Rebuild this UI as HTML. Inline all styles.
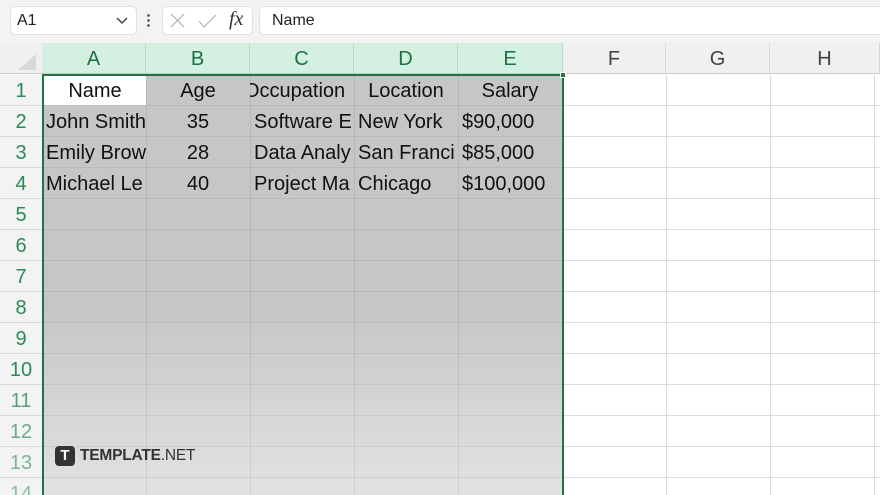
<!DOCTYPE html>
<html><head><meta charset="utf-8"><style>
*{margin:0;padding:0;box-sizing:border-box}
html,body{width:880px;height:495px;overflow:hidden}
body{background:#fff;font-family:"Liberation Sans",sans-serif;position:relative}
.a{position:absolute}
.top{left:0;top:0;width:880px;height:43px;background:#f3f3f3}
.box{background:#fff;border:1px solid #e1e1e1;border-radius:5px}
.ch{top:43px;height:31px;font-size:20px;color:#444;text-align:center;line-height:33px;border-right:1px solid #d6d6d6;background:#f0f0f0;border-bottom:1px solid #c8c8c8}
.ch.s{background:#d3f0e0;color:#1e7145;border-right:1px solid #bcd9c8}
.rh{left:0;width:42px;height:31px;font-size:20px;color:#2b8a55;text-align:center;line-height:33px;background:#f3f3f3;border-bottom:1px solid #d8d8d8}
.t{font-size:20px;color:#111;line-height:33px;white-space:nowrap;overflow:hidden}
</style></head><body>
<div class="a top"></div>
<div class="a box" style="left:10px;top:6px;width:127px;height:29px"></div>
<div class="a" style="left:17px;top:12px;font-size:16px;color:#222">A1</div>
<svg class="a" style="left:116px;top:17px" width="12" height="8"><path d="M1 1 L6 6 L11 1" stroke="#444" stroke-width="1.5" fill="none"/></svg>
<div class="a" style="left:147px;top:13px;width:3px;height:14px;background:radial-gradient(circle,#555 1.2px,transparent 1.5px) 0 0/3px 5px"></div>
<div class="a box" style="left:162px;top:6px;width:91px;height:29px"></div>
<svg class="a" style="left:169px;top:12px" width="60" height="18"><path d="M2 2 L15 15 M15 2 L2 15" stroke="#bbb" stroke-width="1.3"/><path d="M30 9 L35 15 L47 3" stroke="#bbb" stroke-width="1.3" fill="none"/></svg>
<div class="a" style="left:229px;top:8px;font-family:'Liberation Serif',serif;font-style:italic;font-size:20px;color:#333">fx</div>
<div class="a box" style="left:259px;top:6px;width:630px;height:29px"></div>
<div class="a" style="left:272px;top:12px;font-size:16px;color:#222">Name</div>

<div class="a" style="left:0;top:43px;width:42px;height:31px;background:#f0f0f0;border-bottom:1px solid #c8c8c8"></div>
<svg class="a" style="left:14px;top:52px" width="24" height="20"><path d="M22 2 L22 18 L4 18 Z" fill="#d8d8d8"/></svg>
<div class="a ch s" style="left:42px;width:104px">A</div>
<div class="a ch s" style="left:146px;width:104px">B</div>
<div class="a ch s" style="left:250px;width:104px">C</div>
<div class="a ch s" style="left:354px;width:104px">D</div>
<div class="a ch s" style="left:458px;width:105px">E</div>
<div class="a ch" style="left:563px;width:103px">F</div>
<div class="a ch" style="left:666px;width:104px">G</div>
<div class="a ch" style="left:770px;width:110px">H</div>

<div class="a" style="left:42px;top:75px;width:838px;height:420px;background:repeating-linear-gradient(#fff 0,#fff 30px,#dcdcdc 30px,#dcdcdc 31px)"></div>
<div class="a" style="left:666px;top:75px;width:1px;height:420px;background:#dcdcdc"></div>
<div class="a" style="left:770px;top:75px;width:1px;height:420px;background:#dcdcdc"></div>
<div class="a" style="left:874px;top:75px;width:1px;height:420px;background:#dcdcdc"></div>
<div class="a" style="left:43px;top:75px;width:520px;height:420px;background:linear-gradient(#c6c6c6 0,#c6c6c6 230px,#e2e2e2 420px)"></div>
<div class="a" style="left:43px;top:75px;width:520px;height:420px;background:repeating-linear-gradient(transparent 0,transparent 30px,rgba(0,0,0,0.06) 30px,rgba(0,0,0,0.06) 31px)"></div>
<div class="a" style="left:146px;top:75px;width:1px;height:420px;background:rgba(0,0,0,0.07)"></div>
<div class="a" style="left:250px;top:75px;width:1px;height:420px;background:rgba(0,0,0,0.07)"></div>
<div class="a" style="left:354px;top:75px;width:1px;height:420px;background:rgba(0,0,0,0.07)"></div>
<div class="a" style="left:458px;top:75px;width:1px;height:420px;background:rgba(0,0,0,0.07)"></div>
<div class="a" style="left:44px;top:75px;width:102px;height:30px;background:#fff"></div>
<div class="a" style="left:42px;top:74px;width:522px;height:430px;border:2px solid #217346"></div>
<div class="a" style="left:560px;top:72px;width:6px;height:6px;background:#217346;border:1px solid #fff"></div>

<div class="a rh" style="top:75px">1</div><div class="a rh" style="top:106px">2</div><div class="a rh" style="top:137px">3</div><div class="a rh" style="top:168px">4</div><div class="a rh" style="top:199px">5</div><div class="a rh" style="top:230px">6</div><div class="a rh" style="top:261px">7</div><div class="a rh" style="top:292px">8</div><div class="a rh" style="top:323px">9</div><div class="a rh" style="top:354px">10</div><div class="a rh" style="top:385px;color:#5aa07a">11</div><div class="a rh" style="top:416px;color:#6aaa85">12</div><div class="a rh" style="top:447px;color:#7ab592">13</div><div class="a rh" style="top:478px;color:#8abf9f">14</div>

<div class="a t" style="left:44px;top:75px;width:102px;text-align:center">Name</div>
<div class="a t" style="left:146px;top:75px;width:104px;text-align:center">Age</div>
<div class="a t" style="left:250px;top:75px;width:104px"><span style="margin-left:-6px">Occupation</span></div>
<div class="a t" style="left:354px;top:75px;width:104px;text-align:center">Location</div>
<div class="a t" style="left:458px;top:75px;width:104px;text-align:center">Salary</div>
<div class="a t" style="left:46px;top:106px;width:100px">John Smith</div>
<div class="a t" style="left:146px;top:106px;width:104px;text-align:center">35</div>
<div class="a t" style="left:254px;top:106px;width:100px">Software E</div>
<div class="a t" style="left:358px;top:106px;width:100px">New York</div>
<div class="a t" style="left:462px;top:106px;width:100px">$90,000</div>
<div class="a t" style="left:46px;top:137px;width:100px">Emily Brow</div>
<div class="a t" style="left:146px;top:137px;width:104px;text-align:center">28</div>
<div class="a t" style="left:254px;top:137px;width:100px">Data Analy</div>
<div class="a t" style="left:358px;top:137px;width:100px">San Franci</div>
<div class="a t" style="left:462px;top:137px;width:100px">$85,000</div>
<div class="a t" style="left:46px;top:168px;width:100px">Michael Le</div>
<div class="a t" style="left:146px;top:168px;width:104px;text-align:center">40</div>
<div class="a t" style="left:254px;top:168px;width:100px">Project Ma</div>
<div class="a t" style="left:358px;top:168px;width:100px">Chicago</div>
<div class="a t" style="left:462px;top:168px;width:100px">$100,000</div>

<div class="a" style="left:55px;top:446px;width:20px;height:20px;background:#333;border-radius:4px;color:#fff;font-weight:bold;font-size:15px;text-align:center;line-height:20px">T</div>
<div class="a" style="left:80px;top:446px;font-size:15.5px;color:#333;line-height:20px;letter-spacing:-0.2px"><b>TEMPLATE</b>.NET</div>
</body></html>
